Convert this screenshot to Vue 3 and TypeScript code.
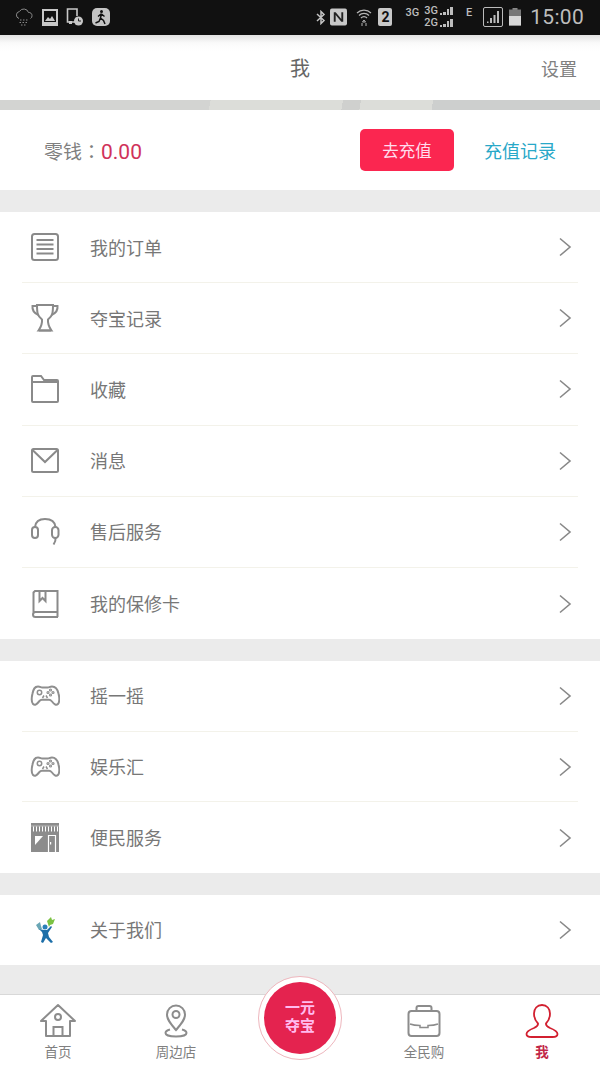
<script setup lang="ts">
interface MenuRow {
  label: string;
  icon: string;
}

const groups: { rows: MenuRow[]; kind: string }[] = [
  {
    kind: "tall",
    rows: [
      { label: "我的订单", icon: "orders" },
      { label: "夺宝记录", icon: "trophy" },
      { label: "收藏", icon: "folder" },
      { label: "消息", icon: "mail" },
      { label: "售后服务", icon: "headset" },
      { label: "我的保修卡", icon: "book" },
    ],
  },
  {
    kind: "mid",
    rows: [
      { label: "摇一摇", icon: "pad" },
      { label: "娱乐汇", icon: "pad" },
      { label: "便民服务", icon: "shop" },
    ],
  },
  { kind: "short", rows: [{ label: "关于我们", icon: "about" }] },
];
</script>

<template>
  <div class="page">
    <div class="status">
      <div class="status-left">
        <svg width="20" height="18" viewBox="0 0 20 18" fill="none" stroke="#8a8a8a" stroke-width="1">
          <path d="M5 10.500a3.600 3.600 0 0 1 .4-7A5 5 0 0 1 14.500 4.500a3 3 0 0 1 3.500 3 3 3 0 0 1-1.500 3" />
          <path d="M6 12h9M5.500 14.500h9M7 17h6" stroke-dasharray="1.500 1.500" />
        </svg>
        <svg width="16" height="17" viewBox="0 0 16 17">
          <path fill="#c8c8c8" fill-rule="evenodd" d="M0 0h16v17H0zM2 2v11h12V2z" />
          <path fill="#c8c8c8" d="M3 12l3-4 2 2 2-3 3 5z" />
        </svg>
        <svg width="18" height="18" viewBox="0 0 18 18">
          <path fill="none" stroke="#c8c8c8" stroke-width="1.600" d="M10 14H1.500V1h9.500v7" />
          <rect x="3" y="13" width="3" height="3" fill="#c8c8c8" />
          <circle cx="12.500" cy="13" r="4.500" fill="#c8c8c8" />
          <path d="M12.500 10.500V13h2.500" fill="none" stroke="#222" stroke-width="1" />
        </svg>
        <svg width="18" height="18" viewBox="0 0 18 18">
          <rect width="18" height="18" rx="5" fill="#c4c4c4" />
          <circle cx="9.500" cy="3.500" r="1.500" fill="#111" />
          <path d="M9.500 5.500L8.500 10l3 2.500L13 16M8.500 10L7 13.500 3.500 15M9 6L6 8.500M9.500 6l3 2.500" fill="none" stroke="#111" stroke-width="1.500" />
        </svg>
      </div>
      <div class="status-right">
        <svg class="bt" width="10" height="15" viewBox="0 0 10 15" fill="none" stroke="#c4c4c4" stroke-width="1.500">
          <path d="M1 4l7 6.500L5 13.500v-12L8 4.500 1 11" />
        </svg>
        <svg class="nfc" width="17" height="18" viewBox="0 0 18 18">
          <rect width="18" height="18" rx="2" fill="#c8c8c8" />
          <path d="M4 4v10h2V7l6 7h2V4h-2v7L6 4z" fill="#222" />
        </svg>
        <svg class="wifi" width="16" height="19" viewBox="0 0 16 19" fill="none" stroke="#b5b5b5" stroke-width="1.200">
          <path d="M1 5a10 10 0 0 1 14 0M3 7.500a7 7 0 0 1 10 0M5 10a4 4 0 0 1 6 0" />
          <path d="M8 12l-1.500 2h3zM6 15v3M10 15v3" stroke-width="1" />
        </svg>
        <span class="sim">2</span>
        <span class="net one">3G</span>
        <span class="net-stack">
          <span class="net-row">3G<i class="bars"><b></b><b></b><b></b><b></b></i></span>
          <span class="net-row">2G<i class="bars"><b></b><b></b><b></b><b></b></i></span>
        </span>
        <span class="net edge">E</span>
        <svg class="signal" width="20" height="20" viewBox="0 0 20 20">
          <rect x=".5" y=".5" width="19" height="19" rx="1.500" fill="none" stroke="#bbb" />
          <path d="M4 16h1.500v-1.500H4zM7 16h2v-5H7zM10.500 16h2V8h-2zM14 16h2V4h-2z" fill="#bbb" />
        </svg>
        <svg class="battery" width="12" height="18" viewBox="0 0 12 18">
          <rect x="3.500" width="5" height="2" fill="#888" />
          <rect y="1.500" width="12" height="16" fill="#777" />
          <rect y="8" width="12" height="9.500" fill="#d8d8d8" />
        </svg>
        <span class="clock">15:00</span>
      </div>
    </div>

    <header class="nav">
      <span class="nav-title">我</span>
      <span class="nav-action">设置</span>
    </header>
    <div class="strip"></div>

    <section class="balance">
      <div class="balance-text">零钱<span class="colon">：</span><span class="amount">0.00</span></div>
      <button class="charge">去充值</button>
      <span class="history">充值记录</span>
    </section>

    <section v-for="group in groups" :key="group.kind" class="group">
      <div v-for="row in group.rows" :key="row.label" class="row" :class="group.kind">
        <div class="row-icon">
          <svg v-if="row.icon === 'orders'" width="30" height="30" viewBox="0 0 30 30" fill="none" stroke="#8a8a8a" stroke-width="2">
            <rect x="2" y="2" width="26" height="26" rx="2.500" />
            <path d="M6.500 8h17M6.500 12.500h17M6.500 17h17M6.500 21.500h17" />
          </svg>
          <svg v-else-if="row.icon === 'trophy'" width="30" height="30" viewBox="0 0 30 30" fill="none" stroke="#8a8a8a" stroke-width="2">
            <path d="M7 2h16c0 8-.5 11-5 14.500-.4 4 1 7.500 3.500 11h-13c2.500-3.500 3.900-7 3.500-11C7.500 13 7 10 7 2z" />
            <path d="M7 3H2.500c-.5 4 1.500 7 6 9M23 3h4.500c.5 4-1.500 7-6 9M9 27.500h12" />
          </svg>
          <svg v-else-if="row.icon === 'folder'" width="30" height="30" viewBox="0 0 30 30" fill="none" stroke="#8a8a8a" stroke-width="2">
            <path d="M2 3a1 1 0 0 1 1-1h8l3 4h13a1 1 0 0 1 1 1v20a1 1 0 0 1-1 1H3a1 1 0 0 1-1-1zM2 8h26" />
          </svg>
          <svg v-else-if="row.icon === 'mail'" width="30" height="30" viewBox="0 0 30 30" fill="none" stroke="#8a8a8a" stroke-width="2">
            <rect x="2" y="3" width="26" height="23" rx="1.500" />
            <path d="M2.500 4L15 16 27.500 4" />
          </svg>
          <svg v-else-if="row.icon === 'headset'" width="30" height="30" viewBox="0 0 30 30" fill="none" stroke="#8a8a8a" stroke-width="2">
            <rect x="2" y="10" width="6" height="11" rx="3" />
            <rect x="22" y="10" width="6.500" height="11" rx="3.200" />
            <path d="M5 10C5.500 5 9 2 15 2s10 3 10.500 8M25.500 21c.5 3-1 5-2 6.500" />
          </svg>
          <svg v-else-if="row.icon === 'book'" width="30" height="30" viewBox="0 0 30 30" fill="none" stroke="#8a8a8a" stroke-width="2">
            <path d="M3.500 24V3.500L5 2h22.500v21H5.500a2.500 2.500 0 0 0 0 5h22.500M27.500 23v5" />
            <path d="M9.500 2v10l3-3 3 3V2" />
          </svg>
          <svg v-else-if="row.icon === 'pad'" width="30" height="22" viewBox="0 0 30 22" fill="none" stroke="#8f8f8f" stroke-width="2">
            <path d="M8 1.500c2 0 3 1 4 1h6c1 0 2-1 4-1 3.500 0 5.500 2.500 6.500 7 1 4 1 8.500-.5 10.500-2 1.800-4 0-6-2.500-1-1.200-2-1.800-3-1.800h-7c-1 0-2 .6-3 1.800-2 2.500-4 4.300-6 2.500C1.500 17 1.500 12.500 2.500 8.500c1-4.500 2-7 5.500-7z" />
            <circle cx="9.500" cy="7.500" r="2.200" stroke-width="1.500" />
            <circle cx="20.500" cy="5" r="1" stroke-width="1.200" />
            <circle cx="20.500" cy="10" r="1" stroke-width="1.200" />
            <circle cx="18" cy="7.500" r="1" stroke-width="1.200" />
            <circle cx="23" cy="7.500" r="1" stroke-width="1.200" />
            <path d="M12.500 13l1.500-2.500M17.500 13L16 10.500" stroke-width="1.500" />
          </svg>
          <svg v-else-if="row.icon === 'shop'" width="28" height="29" viewBox="0 0 28 29">
            <rect width="28" height="29" fill="#8c8c8c" />
            <rect y="2.500" width="28" height="1" fill="#b5b5b5" />
            <path stroke="#fff" stroke-width="1" d="M2.500 3.500v5M5.500 3.500v5M8.500 3.500v5M11.500 3.500v5M14.500 3.500v5M17.500 3.500v5M20.500 3.500v5M23.500 3.500v5M26.500 3.500v5" />
            <rect y="8.500" width="1" height="20.500" fill="#8c8c8c" />
            <path fill="#fff" d="M4 13h11v12H4z" />
            <path fill="#8c8c8c" d="M4 22l8-9h3v12H4z" />
            <path fill="none" stroke="#fff" stroke-width="1.200" d="M17.500 29V12.500h7V29" />
            <rect x="19" y="19" width="1.200" height="2.500" fill="#fff" />
          </svg>
          <svg v-else width="22" height="28" viewBox="0 0 22 28">
            <path fill="#7cc243" d="M13 5l4-4 1 3 3-1-2 5-3 1-1 2-1-3z" />
            <path fill="#6aa6b5" d="M2 9l4-3 1 4 1 3-3 1z" />
            <circle cx="11" cy="11" r="2.500" fill="#2a7fb8" />
            <path fill="#1c6ea8" d="M5 13l5 1h3l4-4 1 1-4 6 1 4 4 5-2 1-5-5-3 5-2-1 2-7-1-3z" />
          </svg>
        </div>
        <span class="row-label">{{ row.label }}</span>
        <svg class="chevron" width="14" height="20" viewBox="0 0 14 20" fill="none" stroke="#888" stroke-width="1.600">
          <path d="M2 1.500L12 10 2 18.500" />
        </svg>
      </div>
    </section>

    <div class="fill"></div>

    <nav class="tabs">
      <div class="tab">
        <svg width="36" height="36" viewBox="0 0 36 36" fill="none" stroke="#8c8c8c" stroke-width="2">
          <path d="M6 18v15h24V18h5L18 2 1 18z" stroke-linejoin="round" />
          <circle cx="18" cy="14" r="3" />
          <path d="M13.500 33v-9h9v9" />
        </svg>
        <span>首页</span>
      </div>
      <div class="tab">
        <svg width="36" height="36" viewBox="0 0 36 36" fill="none" stroke="#8c8c8c" stroke-width="2">
          <path d="M18 27c-5-6-9-10-9-15.500a9 9 0 0 1 18 0C27 17 23 21 18 27z" />
          <circle cx="18" cy="11.500" r="3.500" />
          <path d="M12 26.500c-3 .8-4.500 2-4.500 3.500 0 2 4 3.500 10.500 3.500S28.500 32 28.500 30c0-1.500-1.500-2.700-4.500-3.500" />
        </svg>
        <span>周边店</span>
      </div>
      <div class="tab"></div>
      <div class="tab">
        <svg width="36" height="36" viewBox="0 0 36 36" fill="none" stroke="#8c8c8c" stroke-width="2">
          <rect x="2.500" y="8" width="31" height="25" rx="3" />
          <path d="M10.500 8V5a2 2 0 0 1 2-2h11a2 2 0 0 1 2 2v3" />
          <path d="M4 21c4 1.500 8 1.500 10 1.500v2h8v-2c2 0 6 0 10-1.500" stroke-width="1.500" />
        </svg>
        <span>全民购</span>
      </div>
      <div class="tab tab-active">
        <svg width="36" height="36" viewBox="0 0 36 36" fill="none" stroke="#d22030" stroke-width="1.800">
          <path d="M18 2c-5 0-8 3.800-8 8.500 0 4 1.800 7.800 4 10 .4 2-1 3-4 4.500C5 27 2.500 29 2.500 31c0 2 2 3 5 3h21c3 0 5-1 5-3 0-2-2.500-4-7.500-6-3-1.500-4.400-2.500-4-4.500 2.200-2.200 4-6 4-10C26 5.800 23 2 18 2z" />
        </svg>
        <span>我</span>
      </div>
      <div class="lucky">
        <div class="lucky-inner">一元<br />夺宝</div>
      </div>
    </nav>
  </div>
</template>

<style>
body {
  background: #ebebeb;
}
</style>

<style scoped>
.page {
  position: relative;
  display: flex;
  flex-direction: column;
  width: 600px;
  height: 1067px;
  overflow: hidden;
  background: #ebebeb;
  font-family: "Noto Sans CJK SC", "Noto Sans", sans-serif;
  color: #777;
}

.status {
  display: flex;
  align-items: center;
  justify-content: space-between;
  flex: 0 0 35px;
  padding: 0 16px 1px 14px;
  box-sizing: border-box;
  background: #111;
}

.status-left {
  display: flex;
  align-items: center;
  gap: 8px;
}

.status-right {
  display: flex;
  align-items: center;
  font-family: Roboto, sans-serif;
  color: #bdbdbd;
}

.nfc {
  margin-left: 4px;
}

.wifi {
  margin-left: 9px;
}

.sim {
  display: flex;
  align-items: center;
  justify-content: center;
  width: 14px;
  height: 18px;
  margin-left: 6px;
  border-radius: 2px;
  background: #c8c8c8;
  color: #111;
  font-size: 14px;
  font-weight: 700;
}

.net {
  font-size: 11px;
  font-weight: 500;
}

.one {
  margin: -9px 0 0 13px;
}

.net-stack {
  display: flex;
  flex-direction: column;
  margin-left: 5px;
  font-size: 11px;
  font-weight: 500;
  line-height: 12px;
}

.net-row {
  display: flex;
  align-items: center;
}

.bars {
  display: flex;
  align-items: flex-end;
  gap: 1px;
  height: 8px;
  margin-left: 2px;
}

.bars b {
  width: 2.500px;
  background: #bdbdbd;
}

.bars b:nth-child(1) {
  height: 2px;
}

.bars b:nth-child(2) {
  height: 3px;
}

.bars b:nth-child(3) {
  height: 6px;
}

.bars b:nth-child(4) {
  height: 8px;
}

.edge {
  margin: -9px 0 0 13px;
}

.signal {
  margin-left: 11px;
}

.battery {
  margin-left: 6px;
}

.clock {
  margin-left: 9px;
  font-size: 21px;
  line-height: 24px;
  letter-spacing: 0.3px;
}

.nav {
  display: grid;
  grid-template-columns: 1fr auto 1fr;
  align-items: center;
  flex: 0 0 65px;
  padding-right: 23px;
  padding-left: 23px;
  box-sizing: border-box;
  background: linear-gradient(#e2e2e2, #fafafa 8px, #fff 16px);
}

.nav-title {
  grid-column: 2;
  font-size: 20px;
  color: #666;
}

.nav-action {
  justify-self: end;
  font-size: 18px;
  color: #808080;
}

.strip {
  flex: 0 0 10px;
  background: linear-gradient(100deg, #d3d4d2 0 35%, #dcddd9 35% 57%, #cfd0ce 57% 60%, #dcddd9 60% 72%, #cdcfce 72%);
}

.balance {
  display: flex;
  align-items: center;
  flex: 0 0 80px;
  padding: 0 44px;
  box-sizing: border-box;
  background: #fff;
}

.balance-text {
  flex: 1;
  font-size: 19px;
  color: #808080;
}

.colon {
  font-family: "Noto Sans CJK TC", sans-serif;
}

.amount {
  font-family: Roboto, sans-serif;
  font-size: 21px;
  color: #d0325a;
}

.charge {
  width: 94px;
  height: 42px;
  margin-right: 30px;
  padding: 0;
  border: none;
  border-radius: 5px;
  background: #fb2650;
  color: #fde;
  font-family: inherit;
  font-size: 16.500px;
}

.history {
  font-size: 18px;
  color: #28a8c8;
}

.group {
  margin-top: 22px;
  padding: 0 22px;
  background: #fff;
}

.row {
  display: flex;
  align-items: center;
  box-sizing: border-box;
  border-bottom: 1px solid #f3f2ea;
}

.row:last-child {
  border-bottom: none;
}

.row.tall {
  height: 71.200px;
}

.row.mid {
  height: 70.600px;
}

.row.short {
  height: 70px;
}

.row-icon {
  display: flex;
  align-items: center;
  justify-content: center;
  flex: 0 0 46px;
}

.row-label {
  flex: 1;
  margin-left: 22px;
  padding-bottom: 1px;
  font-size: 18px;
  color: #777;
}

.chevron {
  flex: none;
  margin-right: 6px;
}

.fill {
  flex: 1;
}

.tabs {
  position: relative;
  display: grid;
  grid-template-columns: 116px 120px 128px 120px 116px;
  flex: 0 0 73px;
  box-sizing: border-box;
  border-top: 1px solid #d8d8d8;
  background: #fff;
}

.tab {
  display: flex;
  flex-direction: column;
  align-items: center;
  padding-top: 8px;
  font-size: 13.500px;
  line-height: 18px;
  color: #808080;
}

.tab svg {
  margin-bottom: 3px;
}

.tab-active {
  color: #c22848;
  font-weight: 700;
}

.lucky {
  position: absolute;
  left: 258px;
  top: -19px;
  display: flex;
  align-items: center;
  justify-content: center;
  width: 84px;
  height: 84px;
  box-sizing: border-box;
  border: 1.500px solid #eeb6bd;
  border-radius: 50%;
  background: #fff;
}

.lucky-inner {
  display: flex;
  align-items: center;
  justify-content: center;
  width: 72px;
  height: 72px;
  padding-bottom: 5px;
  box-sizing: border-box;
  border-radius: 50%;
  background: #e4234f;
  color: #fbe;
  font-size: 15px;
  font-weight: 700;
  line-height: 18px;
  text-align: center;
}
</style>
